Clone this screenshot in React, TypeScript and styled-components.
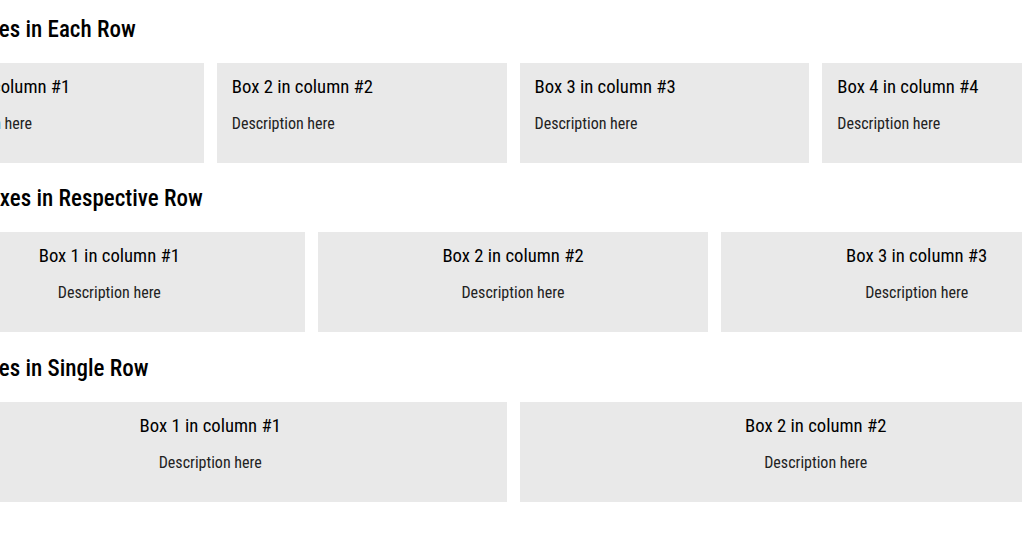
import React from 'react';
import styled, { createGlobalStyle } from 'styled-components';

const GlobalStyle = createGlobalStyle`
  html, body {
    margin: 0;
    padding: 0;
    background: #ffffff;
    overflow: hidden;
  }
  body {
    font-family: "Roboto Condensed", Roboto, "Liberation Sans", sans-serif;
    color: #111;
  }
`;

// Styled Components
const Page = styled.div`
  width: 1198px;
  margin-left: -86px;
  padding-top: 16px;
`;

const Section = styled.section`
  margin-bottom: 22.4px;
`;

const Heading = styled.h2<{ $indent: number }>`
  margin: 0 0 19px ${(p) => p.$indent}px;
  font-size: 23px;
  line-height: 28px;
  font-weight: 500;
  color: #000;
`;

const Row = styled.div`
  display: flex;
  gap: 13px;
`;

const Box = styled.div<{ $centered?: boolean }>`
  flex: 1;
  height: 100px;
  box-sizing: border-box;
  padding: 13px 15px 0;
  background: #e9e9e9;
  text-align: ${(p) => (p.$centered ? 'center' : 'left')};
`;

const BoxTitle = styled.h3`
  margin: 0;
  font-size: 18.7px;
  line-height: 22px;
  font-weight: 400;
  color: #000;
`;

const BoxText = styled.p`
  margin: 16px 0 0;
  font-size: 16px;
  line-height: 20px;
  color: #222;
`;

interface SectionData {
  title: string;
  count: number;
  centered: boolean;
  indent: number;
}

const sections: SectionData[] = [
  { title: '4 Boxes in Each Row', count: 4, centered: false, indent: 34 },
  { title: '3 Boxes in Respective Row', count: 3, centered: true, indent: 45 },
  { title: '2 Boxes in Single Row', count: 2, centered: true, indent: 34 },
];

const App = () => {
  return (
    <>
      <GlobalStyle />
      <Page>
        {sections.map((s) => (
          <Section key={s.title}>
            <Heading $indent={s.indent}>{s.title}</Heading>
            <Row>
              {Array.from({ length: s.count }, (_, i) => (
                <Box key={i} $centered={s.centered}>
                  <BoxTitle>Box {i + 1} in column #{i + 1}</BoxTitle>
                  <BoxText>Description here</BoxText>
                </Box>
              ))}
            </Row>
          </Section>
        ))}
      </Page>
    </>
  );
};

export default App;
